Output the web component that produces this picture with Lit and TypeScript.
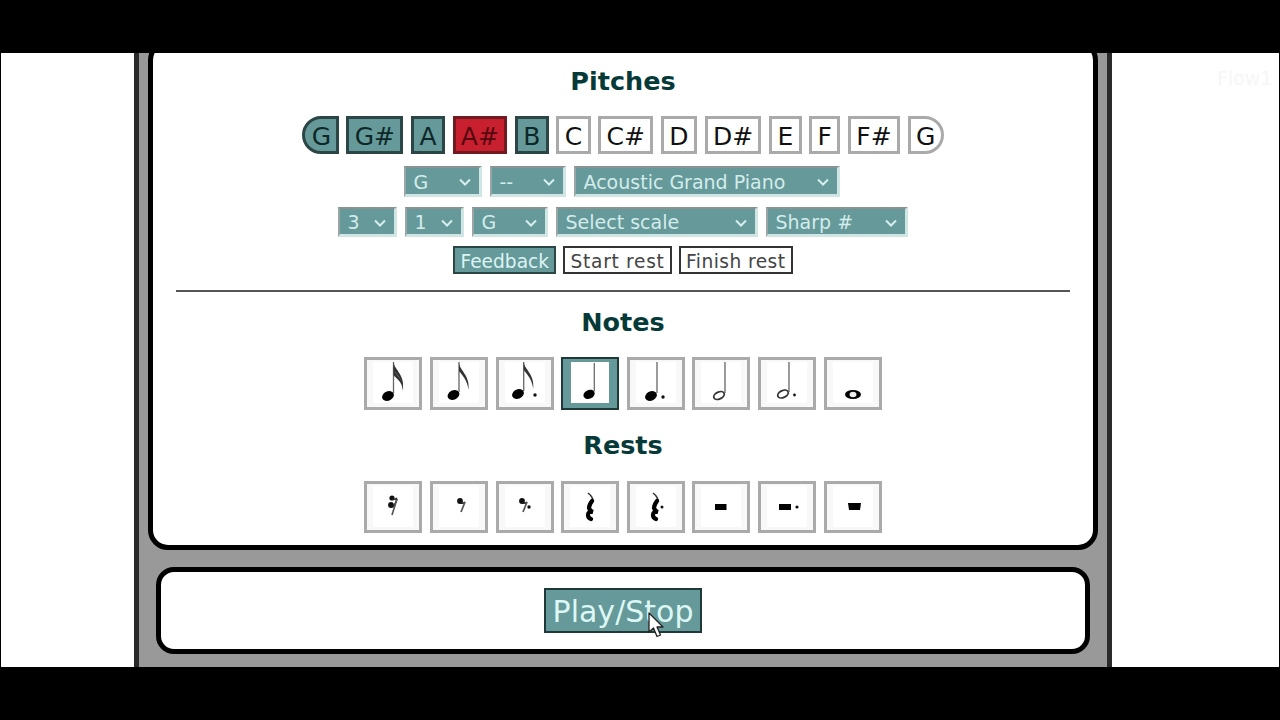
import { LitElement, html, css, svg } from "lit";
import { customElement } from "lit/decorators.js";

const head = (x: number, y: number) => svg`<ellipse cx=${x} cy=${y} rx="6.2" ry="4.6" transform="rotate(-25 ${x} ${y})" fill="#000"></ellipse>`;
const hollow = (x: number, y: number) => svg`<ellipse cx=${x} cy=${y} rx="5.6" ry="3.4" transform="rotate(-25 ${x} ${y})" fill="none" stroke="#333" stroke-width="1.8"></ellipse>`;
const stem = (x: number, y: number) => svg`<line x1=${x} y1="0" x2=${x} y2=${y} stroke="#666" stroke-width="1.3"></line>`;
const dot = (x: number, y: number, r = 1.7) => svg`<circle cx=${x} cy=${y} r=${r} fill="#111"></circle>`;
const flag = (x: number, y = 0, len = 27) => svg`<path d="M${x} ${y} C${x + 1} ${y + 8} ${x + 11} ${y + 12} ${x + 9.5} ${y + len} C${x + 8.5} ${y + len - 10} ${x + 3} ${y + 12} ${x} ${y + 8} Z" fill="#333"></path>`;
const restHook = (dx: number, dy: number, lx1: number, ly1: number, lx2: number, ly2: number) => svg`
  ${dot(dx, dy, 2.9)}
  <path d="M${dx} ${dy + 2} Q${dx + 3} ${dy + 3} ${lx1} ${ly1}" fill="none" stroke="#222" stroke-width="1.5"></path>
  <line x1=${lx1} y1=${ly1} x2=${lx2} y2=${ly2} stroke="#555" stroke-width="1.7"></line>`;
const quarterRest = (x: number) => svg`
  <path d="M${x} 7 Q${x + 5} 11 ${x + 5} 15" fill="none" stroke="#333" stroke-width="1.6"></path>
  <path d="M${x + 4} 15 Q${x + 1} 19 ${x + 1} 22 Q${x + 2} 25 ${x + 5} 26 Q${x} 25 ${x} 29 Q${x} 32 ${x + 3} 33" fill="none" stroke="#000" stroke-width="4.2" stroke-linecap="round"></path>`;
const bar = (x: number, y: number, w: number, h: number) => svg`<rect x=${x} y=${y} width=${w} height=${h} fill="#000"></rect>`;

const NOTES = [
  svg`${head(15, 34)}${stem(20.5, 31)}${flag(20.5)}${flag(20.5, 5, 24)}`,
  svg`${head(14.5, 33)}${stem(20, 30)}${flag(20, 1)}`,
  svg`${head(13, 32)}${stem(18.7, 29)}${flag(18.7, 0)}${dot(30, 33)}`,
  svg`${head(19, 33)}${stem(24.5, 30)}`,
  svg`${head(15, 34)}${stem(21, 31)}${dot(27, 35)}`,
  svg`${hollow(18, 33.5)}${stem(24, 31)}`,
  svg`${hollow(16, 32)}${stem(22, 30)}${dot(27.5, 33, 1.4)}`,
  svg`<ellipse cx="20" cy="32.5" rx="8" ry="4.6" fill="#000"></ellipse><ellipse cx="20" cy="32.5" rx="3.4" ry="2.8" fill="#eee"></ellipse>`,
];
const RESTS = [
  svg`${dot(19, 12, 2.6)}${restHook(18, 19, 24, 13, 19, 29)}<path d="M19 13 Q22 14 24 12" fill="none" stroke="#222" stroke-width="1.4"></path>`,
  svg`${restHook(21, 15, 26, 16, 22, 26)}`,
  svg`${restHook(17, 15, 22, 16, 18, 26)}${dot(24, 21, 1.7)}`,
  svg`${quarterRest(18)}`,
  svg`${quarterRest(17)}${dot(26, 21, 1.5)}`,
  svg`${bar(14, 18, 11.5, 6)}`,
  svg`${bar(12, 18, 12, 6)}${dot(30, 21, 1.6)}`,
  svg`<path d="M15 17 H28 L27 24 H16 Z" fill="#000"></path>`,
];

const KEYS = [
  { n: "G", c: "on first" }, { n: "G#", c: "on" }, { n: "A", c: "on" }, { n: "A#", c: "red" }, { n: "B", c: "on" },
  { n: "C", c: "" }, { n: "C#", c: "" }, { n: "D", c: "" }, { n: "D#", c: "" }, { n: "E", c: "" },
  { n: "F", c: "" }, { n: "F#", c: "" }, { n: "G", c: "last" },
];
const ROW1 = [{ t: "G", w: 78 }, { t: "--", w: 76 }, { t: "Acoustic Grand Piano", w: 266 }];
const ROW2 = [{ t: "3", w: 59 }, { t: "1", w: 59 }, { t: "G", w: 76 }, { t: "Select scale", w: 202 }, { t: "Sharp #", w: 142 }];

@customElement("app-root")
export class AppRoot extends LitElement {
  static styles = css`
    :host { display: block; width: 1280px; height: 720px; background: #000; font-family: "DejaVu Sans", Verdana, sans-serif; overflow: hidden; }
    .stage { margin-top: 53px; height: 614px; display: flex; padding: 0 1px; overflow: hidden; position: relative; }
    .side { background: #fff; width: 133px; flex: none; }
    .side.right { width: 167px; color: #f6f6f6; font-size: 19px; padding: 14px 0 0 105px; box-sizing: border-box; }
    .frame { width: 978px; flex: none; box-sizing: border-box; background: #999; border-left: 5px solid #2a2a2a; border-right: 5px solid #2a2a2a; padding: 0 9px; margin-top: -13px; height: 627px; }
    .panel { background: #fff; border: 5px solid #000; border-radius: 20px; box-sizing: border-box; display: flex; flex-direction: column; align-items: center; }
    .main { height: 510px; padding-top: 21px; }
    h2 { margin: 0; font-size: 25.5px; line-height: 30px; font-weight: 700; color: #063a38; }
    .keys { display: flex; gap: 7.75px; margin-top: 20px; }
    .key { height: 38px; box-sizing: border-box; border: 3px solid #aaa; background: #fff; color: #111; font: 25px/33px "DejaVu Sans", Verdana, sans-serif; padding: 1px 5.3px 0; }
    .key.on { background: #669999; border-color: #2c4545; color: #0d2828; }
    .key.red { background: #c8202f; border-color: #701a22; color: #55090f; }
    .key.first { border-radius: 19px 0 0 19px; padding-left: 6.5px; padding-right: 4.5px; }
    .key.last { border-radius: 0 19px 19px 0; }
    .row { display: flex; gap: 8px; margin-top: 12px; margin-left: -2px; }
    .row.r2 { margin-top: 10px; margin-left: 0; }
    .sel { position: relative; display: block; }
    select { appearance: none; -webkit-appearance: none; display: block; width: 100%; height: 31px; box-sizing: border-box; background: #669999; color: #d3ecec; font: 19px "DejaVu Sans", Verdana, sans-serif; padding: 1px 0 0 7.5px; border-style: solid; border-width: 2px 3px 3px 2px; border-color: #8b9292 #cfe6e4 #cfe6e4 #9aa5a5; border-radius: 0; }
    .r2 select { height: 30px; }
    .sel svg { position: absolute; right: 11px; top: 12px; width: 12px; height: 8px; pointer-events: none; }
    .btns { display: flex; gap: 7px; margin-top: 9px; }
    .btn { height: 28px; box-sizing: border-box; border: 2px solid #333; background: #fff; color: #444; font: 18.6px/25px "DejaVu Sans", Verdana, sans-serif; padding: 1px 5px 0; }
    .btn.fb { background: #669999; color: #dcf4f4; border-color: #2c4545; }
    .btn.start { letter-spacing: 0.7px; padding: 1px 5.5px 0; }
    .btn.finish { letter-spacing: 0.45px; padding: 1px 5px 0; }
    hr { width: 894px; height: 2px; box-sizing: border-box; background: #555; border: 0; margin: 16px 0 15px; }
    .tiles { display: flex; gap: 7.6px; margin-top: 20px; }
    .rests-h { margin-top: 20px; }
    .tile { width: 58px; height: 53px; box-sizing: border-box; border: 3px solid #aaa; background: #f8f8f8; padding: 2px 6px; display: flex; }
    .tile svg { width: 40px; height: 41px; background: #fff; display: block; }
    .tile.sel-t { background: #669999; border: 2px solid #1f3838; padding: 3px 8px 5px; }
    .rests { margin-top: 21px; }
    .rests .tile { height: 52px; padding: 2px 6px 1px; }
    .play { margin: 17px 8px 0; height: 87px; justify-content: center; border-radius: 18px; }
    .pbtn { width: 158px; height: 45px; box-sizing: border-box; border: 2px solid #1f3838; background: #669999; color: #dcf7f4; font: 30px/38px "DejaVu Sans", Verdana, sans-serif; padding: 3px 0 0; text-align: center; white-space: nowrap; }
    .cursor { position: absolute; left: 648px; top: 559px; width: 17px; height: 27px; }
  `;

  private chev() {
    return html`<svg viewBox="0 0 12 8"><path d="M1 1.5 L6 6.5 L11 1.5" fill="none" stroke="#d6eeee" stroke-width="2"></path></svg>`;
  }
  private select(o: { t: string; w: number }) {
    return html`<label class="sel" style="width:${o.w}px"><select><option>${o.t}</option></select>${this.chev()}</label>`;
  }

  render() {
    return html`<div class="stage">
      <div class="side"></div>
      <div class="frame">
        <section class="panel main">
          <h2>Pitches</h2>
          <div class="keys">${KEYS.map((k) => html`<button class="key ${k.c}">${k.n}</button>`)}</div>
          <div class="row">${ROW1.map((o) => this.select(o))}</div>
          <div class="row r2">${ROW2.map((o) => this.select(o))}</div>
          <div class="btns">
            <button class="btn fb">Feedback</button>
            <button class="btn start">Start rest</button>
            <button class="btn finish">Finish rest</button>
          </div>
          <hr />
          <h2>Notes</h2>
          <div class="tiles">${NOTES.map((n, i) => html`<div class="tile ${i === 3 ? "sel-t" : ""}"><svg viewBox="0 0 40 41">${n}</svg></div>`)}</div>
          <h2 class="rests-h">Rests</h2>
          <div class="tiles rests">${RESTS.map((n) => html`<div class="tile"><svg viewBox="0 0 40 41">${n}</svg></div>`)}</div>
        </section>
        <section class="panel play"><button class="pbtn">Play/Stop</button></section>
      </div>
      <div class="side right">Flow1</div>
      <svg class="cursor" viewBox="0 0 17 27"><path d="M1 1 L1 20 L5.5 16 L9 24.5 L12.5 23 L9 15 L15 15 Z" fill="#fff" stroke="#222" stroke-width="1.3" stroke-linejoin="round"></path></svg>
    </div>`;
  }
}
